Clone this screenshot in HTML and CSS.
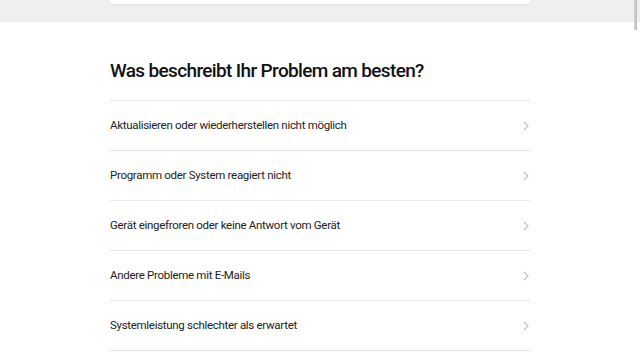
FILE: index.html
```html
<!DOCTYPE html>
<html lang="de">
<head>
<meta charset="utf-8">
<link rel="stylesheet" href="styles.css">
</head>
<body>
<div class="top-band">
  <div class="card"></div>
</div>
<div class="scrollbar"></div>
<main class="content">
  <h1 class="title">Was beschreibt Ihr Problem am besten?</h1>
  <ul class="list">
    <li class="row"><span>Aktualisieren oder wiederherstellen nicht möglich</span><svg class="chev" viewBox="0 0 6 10"><path d="M1 1l4 4-4 4" /></svg></li>
    <li class="row"><span>Programm oder System reagiert nicht</span><svg class="chev" viewBox="0 0 6 10"><path d="M1 1l4 4-4 4" /></svg></li>
    <li class="row"><span>Gerät eingefroren oder keine Antwort vom Gerät</span><svg class="chev" viewBox="0 0 6 10"><path d="M1 1l4 4-4 4" /></svg></li>
    <li class="row"><span>Andere Probleme mit E-Mails</span><svg class="chev" viewBox="0 0 6 10"><path d="M1 1l4 4-4 4" /></svg></li>
    <li class="row"><span>Systemleistung schlechter als erwartet</span><svg class="chev" viewBox="0 0 6 10"><path d="M1 1l4 4-4 4" /></svg></li>
  </ul>
</main>
</body>
</html>
```
FILE: styles.css
```css
html, body { margin: 0; padding: 0; background: #fff; }
body { font-family: Roboto, "Liberation Sans", sans-serif; color: #1d1d1f; overflow: hidden; height: 360px; position: relative; }
.top-band { height: 22px; background: #efefef; display: flex; justify-content: center; }
.card { width: 420px; height: 4px; background: #fff; border-radius: 0 0 7px 7px; box-shadow: 0 1px 2px rgba(0,0,0,0.06); }
.scrollbar { position: absolute; top: 0; right: 3px; width: 3px; height: 30px; background: linear-gradient(to right, #d4d4d4, #bdbdbd); }
.content { width: 420px; margin: 0 auto; padding-top: 38px; }
.title { margin: 0; font-size: 19px; font-weight: 500; letter-spacing: -0.65px; line-height: 22px; height: 22px; color: #111; }
.list { list-style: none; margin: 18px 0 0; padding: 0; border-top: 1px solid #e6e6e6; }
.row { height: 49px; border-bottom: 1px solid #e6e6e6; display: flex; align-items: center; justify-content: space-between; font-size: 11.5px; letter-spacing: -0.3px; color: #222; }
.row span { padding-bottom: 2px; }
.chev { width: 6px; height: 10px; margin-right: 1px; fill: none; stroke: #bdbdbd; stroke-width: 1.1; }
```
